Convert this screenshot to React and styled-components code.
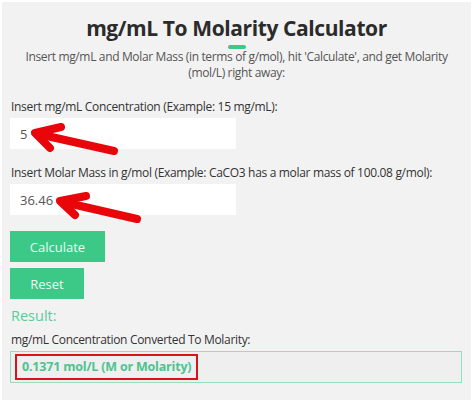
import styled, { createGlobalStyle } from "styled-components";

const GlobalStyle = createGlobalStyle`
  html, body {
    margin: 0;
    padding: 0;
    background: #ffffff;
  }
  * {
    box-sizing: border-box;
  }
`;

const GREEN = "#3cc887";

const Panel = styled.div`
  position: relative;
  margin: 2px 3px 0 2px;
  height: 398px;
  background: #f2f2f2;
  padding: 10px 8px 0 8px;
  font-family: "Open Sans", "Liberation Sans", sans-serif;
  color: #333;
`;

const Header = styled.header`
  display: flex;
  flex-direction: column;
  align-items: center;
  text-align: center;
`;

const Title = styled.h1`
  margin: 0;
  font-size: 21px;
  line-height: 32px;
  font-weight: 700;
  color: #2b2b2b;
  letter-spacing: -0.4px;
`;

const Underline = styled.span`
  display: block;
  width: 18px;
  height: 4px;
  border-radius: 2px;
  background: ${GREEN};
  margin-top: 1px;
`;

const Subtitle = styled.p`
  margin: 0;
  font-size: 12px;
  line-height: 16px;
  letter-spacing: -0.35px;
  color: #555;
`;

const Form = styled.div`
  display: flex;
  flex-direction: column;
  align-items: flex-start;
  margin-top: 18px;
`;

const Label = styled.label`
  font-size: 12px;
  line-height: 16px;
  letter-spacing: -0.32px;
  color: #333;
  margin-bottom: 3px;
  margin-left: 1px;
`;

const Field = styled.div`
  width: 226px;
  height: 31px;
  background: #ffffff;
  display: flex;
  align-items: center;
  padding-left: 10px;
  font-size: 13px;
  color: #555;
  margin-bottom: 16px;
`;

const Button = styled.button`
  height: 31px;
  width: ${(p) => p.$width}px;
  border: none;
  background: ${GREEN};
  color: #eafaf2;
  font-family: inherit;
  font-size: 13px;
  padding: 0;
  margin-bottom: 6px;
  cursor: pointer;
`;

const ResultHeading = styled.div`
  font-size: 14.5px;
  line-height: 22px;
  color: #5cc99a;
  margin: 0 0 5px 1px;
`;

const ResultBox = styled.div`
  width: 452px;
  height: 32px;
  border: 1px solid #94dfbe;
  background: #efefef;
  display: flex;
  align-items: center;
  padding-left: 4px;
`;

const ResultValue = styled.span`
  display: inline-block;
  border: 2px solid #d8141a;
  padding: 2px 5px;
  font-size: 12.5px;
  line-height: 18px;
  letter-spacing: -0.2px;
  font-weight: 700;
  color: #4cc48f;
`;

const Arrows = styled.svg`
  position: absolute;
  left: 0;
  top: 0;
  pointer-events: none;
`;

function Arrow({ tip, tail, up, down }) {
  return (
    <g
      stroke="#e8060b"
      strokeWidth="8"
      strokeLinecap="round"
      strokeLinejoin="round"
      fill="none"
    >
      <path d={`M${tail[0]} ${tail[1]} L${tip[0] + 3} ${tip[1] + 1}`} />
      <path d={`M${up[0]} ${up[1]} L${tip[0]} ${tip[1]} L${down[0]} ${down[1]}`} />
    </g>
  );
}

export default function App() {
  return (
    <>
      <GlobalStyle />
      <Panel>
        <Header>
          <Title>mg/mL To Molarity Calculator</Title>
          <Underline />
          <Subtitle>
            Insert mg/mL and Molar Mass (in terms of g/mol), hit 'Calculate', and get Molarity
            (mol/L) right away:
          </Subtitle>
        </Header>

        <Form>
          <Label>Insert mg/mL Concentration (Example: 15 mg/mL):</Label>
          <Field>5</Field>
          <Label>Insert Molar Mass in g/mol (Example: CaCO3 has a molar mass of 100.08 g/mol):</Label>
          <Field>36.46</Field>
          <Button $width={95}>Calculate</Button>
          <Button $width={74}>Reset</Button>
          <ResultHeading>Result:</ResultHeading>
          <Label>mg/mL Concentration Converted To Molarity:</Label>
          <ResultBox>
            <ResultValue>0.1371 mol/L (M or Molarity)</ResultValue>
          </ResultBox>
        </Form>

        <Arrows width="471" height="398" viewBox="2 2 471 398">
          <Arrow tip={[35, 133]} tail={[114, 151]} up={[61, 127]} down={[50, 148]} />
          <Arrow tip={[60, 201]} tail={[137, 219]} up={[86, 196]} down={[75, 215]} />
        </Arrows>
      </Panel>
    </>
  );
}
